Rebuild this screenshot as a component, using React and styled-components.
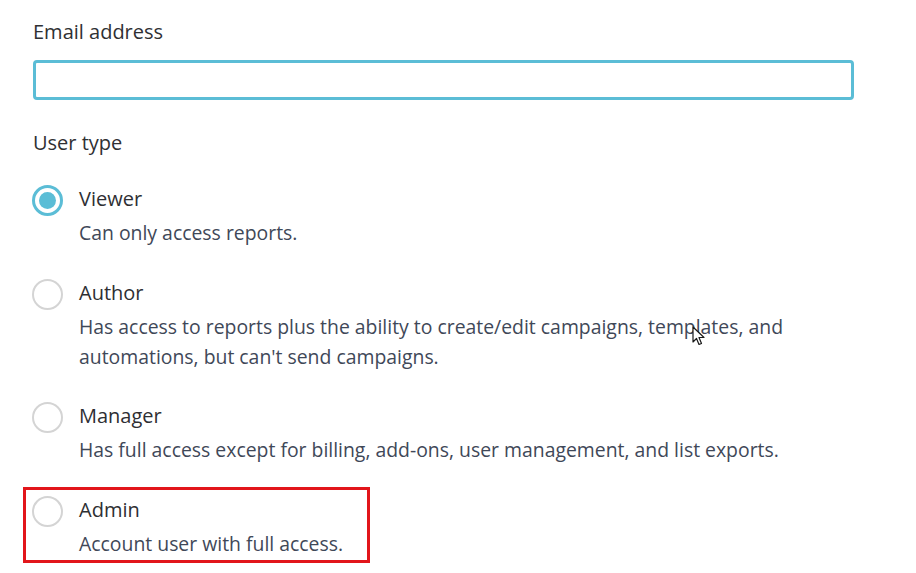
import React from "react";
import styled, { createGlobalStyle } from "styled-components";

const Global = createGlobalStyle`
  html, body { margin: 0; padding: 0; background: #ffffff; }
  body { font-family: "Open Sans", "Noto Sans", sans-serif; -webkit-font-smoothing: antialiased; }
  *, *::before, *::after { box-sizing: border-box; }
`;

const Page = styled.div`
  position: relative;
  width: 916px;
  height: 573px;
  overflow: hidden;
  padding: 19px 0 0 33px;
`;

const FieldLabel = styled.div`
  font-size: 20px;
  line-height: 26px;
  color: #2f3033;
  margin-top: ${(p) => p.$mt || 0}px;
`;

const EmailInput = styled.input`
  display: block;
  width: 821px;
  height: 40px;
  margin-top: 15px;
  border: 3px solid #5bbdd6;
  border-radius: 4px;
  outline: none;
  padding: 0 10px;
  font-family: inherit;
  font-size: 17px;
  background: #fff;
`;

const OptionList = styled.div`
  display: flex;
  flex-direction: column;
  gap: 29.5px;
  margin-top: 28px;
`;

const Option = styled.div`
  position: relative;
  display: grid;
  grid-template-columns: 31px 1fr;
  column-gap: 15px;
  align-items: start;
  ${(p) =>
    p.$highlight &&
    `
    &::after {
      content: "";
      position: absolute;
      left: -10px;
      top: -8px;
      width: 347px;
      height: 76px;
      border: 3px solid #e2161b;
      pointer-events: none;
    }
  `}
`;

const Radio = styled.span`
  display: flex;
  align-items: center;
  justify-content: center;
  width: 31px;
  height: 31px;
  margin-top: 1px;
  margin-left: -1px;
  border-radius: 50%;
  border: ${(p) => (p.$checked ? "3px solid #5bbdd6" : "2px solid #d4d4d4")};
  background: #fff;
  &::before {
    content: "";
    display: ${(p) => (p.$checked ? "block" : "none")};
    width: 17px;
    height: 17px;
    border-radius: 50%;
    background: #5bbdd6;
  }
`;

const OptionText = styled.div`
  display: flex;
  flex-direction: column;
`;

const OptionTitle = styled.div`
  font-size: 20px;
  line-height: 30px;
  color: #2e2f33;
  font-weight: 500;
  margin-bottom: 4px;
`;

const OptionDesc = styled.div`
  font-size: 19.4px;
  line-height: 30px;
  color: #3f4858;
  max-width: 760px;
`;

const Cursor = styled.svg`
  position: absolute;
  left: 692px;
  top: 326px;
  width: 14px;
  height: 20px;
  pointer-events: none;
`;

const options = [
  { title: "Viewer", desc: "Can only access reports.", checked: true },
  {
    title: "Author",
    desc: "Has access to reports plus the ability to create/edit campaigns, templates, and automations, but can't send campaigns.",
  },
  {
    title: "Manager",
    desc: "Has full access except for billing, add-ons, user management, and list exports.",
  },
  { title: "Admin", desc: "Account user with full access.", highlight: true },
];

export default function App() {
  return (
    <>
      <Global />
      <Page>
        <FieldLabel>Email address</FieldLabel>
        <EmailInput type="email" />
        <FieldLabel $mt={30}>User type</FieldLabel>
        <OptionList>
          {options.map((o) => (
            <Option key={o.title} $highlight={o.highlight}>
              <Radio $checked={o.checked} />
              <OptionText>
                <OptionTitle>{o.title}</OptionTitle>
                <OptionDesc>{o.desc}</OptionDesc>
              </OptionText>
            </Option>
          ))}
        </OptionList>
        <Cursor viewBox="0 0 14 20">
          <path
            d="M1 1 L1 16 L4.5 12.5 L7 18.5 L9.5 17.5 L7 11.5 L12 11.5 Z"
            fill="#ffffff"
            stroke="#1a1a1a"
            strokeWidth="1.2"
            strokeLinejoin="round"
          />
        </Cursor>
      </Page>
    </>
  );
}
